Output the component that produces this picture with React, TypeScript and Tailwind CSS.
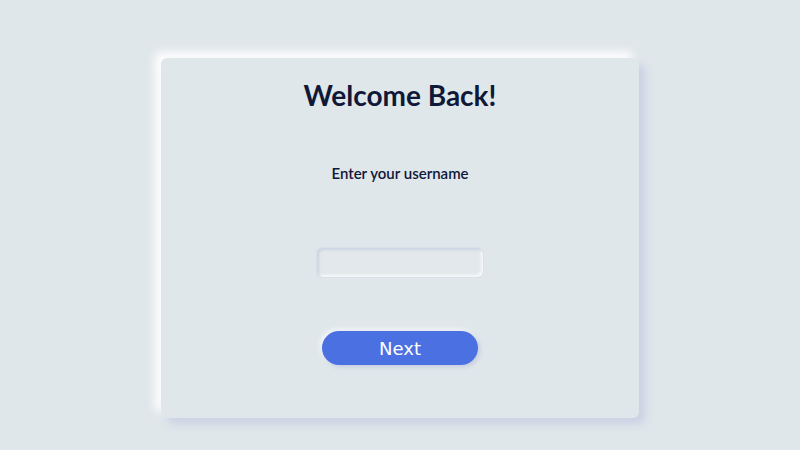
import React, { useState } from "react";

// Neumorphic login card: soft raised panel, inset field, pill button
export default function App() {
  const [username, setUsername] = useState("");

  return (
    <div className="w-[800px] h-[450px] bg-[#e0e7ea] flex justify-center pt-[58px]">
      <div className="w-[478px] h-[360px] rounded-md bg-[#e0e7ea] shadow-[6px_6px_10px_#c9d1e4,-6px_-6px_10px_#ffffff] flex flex-col items-center">
        <h1 className="mt-[19px] text-[28px] leading-9 font-bold text-[#101838] font-['Lato',sans-serif]">
          Welcome Back!
        </h1>

        <label
          htmlFor="username"
          className="mt-[50px] text-[15px] leading-5 font-semibold text-[#101838] font-['Lato',sans-serif]"
        >
          Enter your username
        </label>

        <input
          id="username"
          value={username}
          onChange={(e) => setUsername(e.target.value)}
          className="mt-[64px] w-[168px] h-[31px] rounded-md bg-[#e2e8eb] outline-none px-2 text-sm shadow-[inset_2px_2px_3px_#cdd4e2,inset_-2px_-2px_3px_#f7f9fb] border border-[#d9e0e6]"
        />

        <button className="mt-[53px] w-[156px] h-[34px] rounded-full bg-[#4b70e2] text-white text-[18px] font-['DejaVu_Sans',sans-serif] shadow-[2px_2px_4px_#c3cbe0,-2px_-2px_4px_#f5f7fa]">
          Next
        </button>
      </div>
    </div>
  );
}
